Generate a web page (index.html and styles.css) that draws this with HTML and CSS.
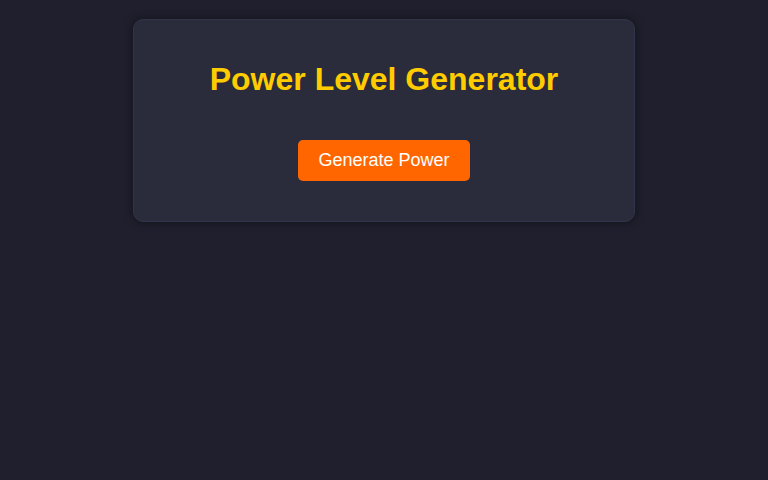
FILE: index.html
```html
<!DOCTYPE html>
<html lang="en">
<head>
  <meta charset="UTF-8" />
  <meta name="viewport" content="width=device-width, initial-scale=1.0" />
  <title>Power Level Generator</title>
  <link rel="stylesheet" href="styles.css">
</head>
<body>

  <!-- Generator card -->
  <div class="container">
    <h1>Power Level Generator</h1>
    <button class="generate-btn" onclick="generatePower()">Generate Power</button>
    <div class="result" id="result"></div>
  </div>

  <script>
    function generatePower() {
      const level = Math.floor(Math.random() * 9001) + 1;
      document.getElementById("result").innerText = `Power Level: ${level}`;
    }
  </script>

</body>
</html>
```

FILE: styles.css
```css
* { box-sizing: border-box; }
body { margin: 0; font-family: 'Liberation Sans', Arial, sans-serif; background: #1f1f2d; color: #fff; }

.container { width: 502px; margin: 19px auto; padding: 20px; text-align: center; background: #2a2c3b; border: 1px solid #30334a; border-radius: 10px; box-shadow: 0 0 10px rgba(0,0,0,0.4); }
.container h1 { color: #ffcc00; font-size: 2em; margin: 0.67em 0; }

.generate-btn { margin-top: 20px; padding: 10px 20px; font-family: inherit; font-size: 18px; color: #fff; background: #ff6600; border: none; border-radius: 5px; cursor: pointer; }
.generate-btn:hover { background: #e65c00; }

.result { margin-top: 20px; font-size: 1.2em; }
```
